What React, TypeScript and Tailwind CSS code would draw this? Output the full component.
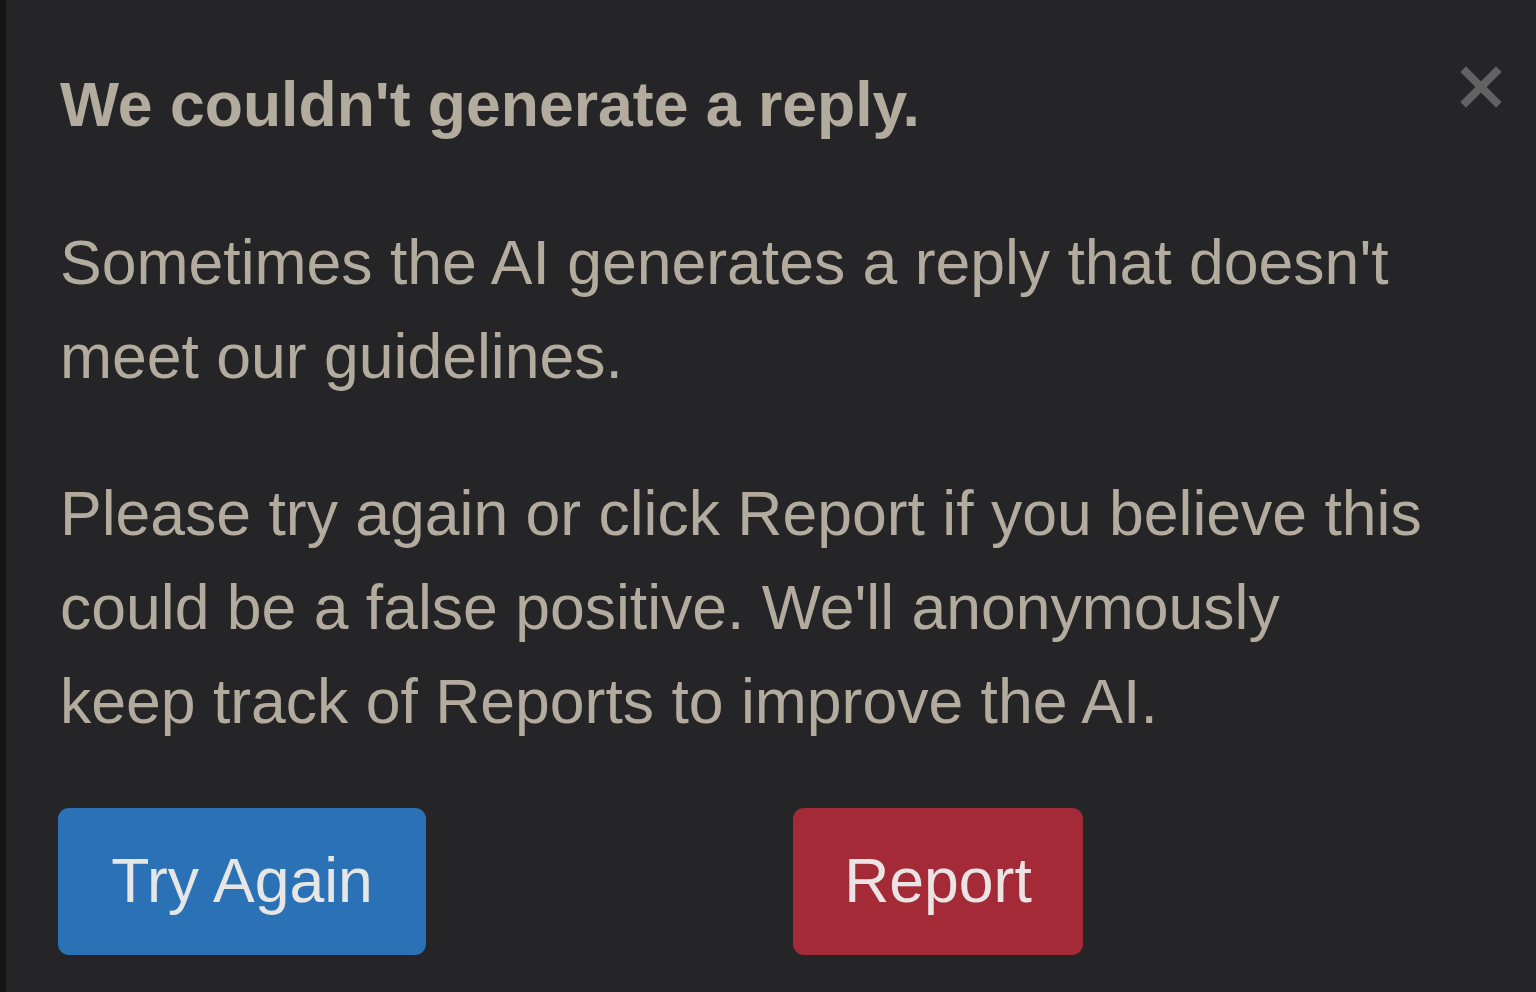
export default function App() {
  return (
    <div className="flex h-[992px] w-[1536px] overflow-hidden bg-[#161616]" style={{ fontFamily: '"Liberation Sans", Arial, sans-serif' }}>
      <div className="relative ml-[6px] flex-1 bg-[#252527] pl-[54px] pt-[58px] text-[62.5px] leading-[1.5] text-[#b3ab9d]">
        <button className="absolute right-[34px] top-[66px] text-[#626262]" aria-label="Close">
          <svg width="42" height="42" viewBox="0 0 42 42" fill="none" stroke="currentColor" strokeWidth="8" strokeLinecap="square">
            <path d="M6 6 L36 36 M36 6 L6 36" />
          </svg>
        </button>
        <h2 className="font-bold">We couldn't generate a reply.</h2>
        <p className="mt-[64px]">
          Sometimes the AI generates a reply that doesn't
          <br />
          meet our guidelines.
        </p>
        <p className="mt-[64px]">
          Please try again or click Report if you believe this
          <br />
          could be a false positive. We'll anonymously
          <br />
          keep track of Reports to improve the AI.
        </p>
        <div className="mt-[59px] flex gap-[367px]">
          <button className="-ml-[2px] h-[147px] w-[368px] rounded-[11px] bg-[#2a72b5] text-[#e6e6e6]">Try Again</button>
          <button className="h-[147px] w-[290px] rounded-[11px] bg-[#a32a36] text-[#ece4e4]">Report</button>
        </div>
      </div>
    </div>
  );
}
